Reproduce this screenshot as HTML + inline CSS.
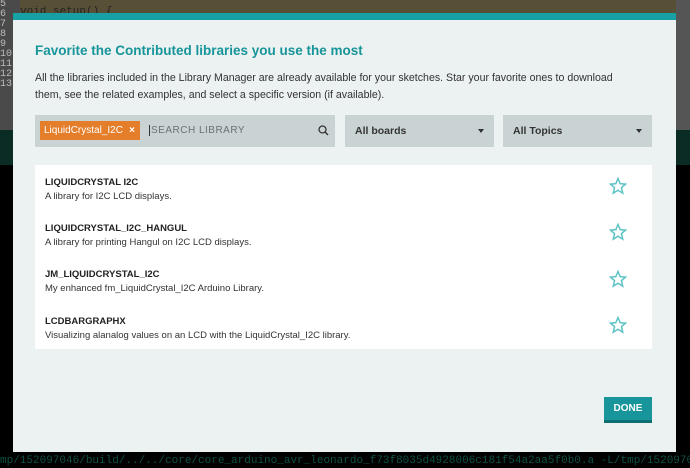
<!DOCTYPE html>
<html><head><style>
*{margin:0;padding:0;box-sizing:border-box}
body{width:690px;height:468px;overflow:hidden;background:#000;font-family:"Liberation Sans",sans-serif;position:relative}
.bg1{position:absolute;left:0;top:0;width:690px;height:130px;background:#584f37}
.bg2{position:absolute;left:0;top:130px;width:690px;height:35px;background:#0a2c24}
.gut{position:absolute;left:0;top:0;width:20px;height:130px;background:#4a4a4a;color:#bbb;font:10px "Liberation Mono",monospace;line-height:10px}
.bgr{position:absolute;left:676px;top:0;width:14px;height:130px;background:#555}
.code{position:absolute;left:20px;top:6px;color:#222;font:11px "Liberation Mono",monospace}
.bot{position:absolute;left:0;top:455px;width:690px;overflow:hidden;color:#0f5045;font:11px "Liberation Mono",monospace;white-space:nowrap}
.modal{position:absolute;left:13px;top:13px;width:663px;height:439px;background:#ecf1f1;border-top:7px solid #17a1a5}
h1{position:absolute;left:22px;top:23px;font-size:13.5px;color:#17959a;font-weight:bold}
.desc{position:absolute;left:22px;top:50px;width:598px;font-size:10.6px;line-height:17px;color:#333}
.search{position:absolute;left:22px;top:95px;width:300px;height:32px;background:#cad3d4}
.tag{position:absolute;left:5px;top:6px;width:100px;height:19px;background:#e47e2a;color:#fff;font-size:10px;line-height:19px;padding-left:4px}
.tag b{position:absolute;right:5px;top:0}
.ph{position:absolute;left:114px;top:10px;font-size:10px;color:#6a7173;letter-spacing:.5px;border-left:1px solid #333;padding-left:1px}
.sel{position:absolute;top:95px;height:32px;background:#cad3d4;font-size:10.5px;font-weight:bold;color:#333;line-height:32px;padding-left:10px}
.sel:after{content:"";position:absolute;right:10px;top:14px;border:3.5px solid transparent;border-top:4px solid #333}
.list{position:absolute;left:22px;top:145px;width:617px;height:184px;background:#fff}
.it{position:absolute;left:10px;width:590px}
.it .t{font-size:9.5px;font-weight:bold;color:#222}
.it .d{font-size:9.5px;color:#333;margin-top:3px}
.star{position:absolute;left:574px}
.done{position:absolute;left:591px;top:377px;width:48px;height:26px;background:#17959a;border-bottom:3px solid #0e6f73;color:#fff;font-size:10px;font-weight:bold;text-align:center;line-height:24px}
</style></head><body>
<div class="bg1"></div><div class="bg2"></div><div class="bgr"></div>
<div class="gut">5<br>6<br>7<br>8<br>9<br>10<br>11<br>12<br>13</div>
<div class="code">void setup() {</div>
<div class="bot">mp/152097046/build/../../core/core_arduino_avr_leonardo_f73f8035d4928006c181f54a2aa5f0b0.a -L/tmp/152097046/build -lm</div>
<div class="modal">
<h1>Favorite the Contributed libraries you use the most</h1>
<div class="desc">All the libraries included in the Library Manager are already available for your sketches. Star your favorite ones to download them, see the related examples, and select a specific version (if available).</div>
<div class="search"><div class="tag">LiquidCrystal_I2C<b>×</b></div><div class="ph">SEARCH LIBRARY</div>
<svg style="position:absolute;left:283px;top:10px" width="11" height="11" viewBox="0 0 11 11"><circle cx="4.5" cy="4.5" r="3.5" fill="none" stroke="#333" stroke-width="1.3"/><path d="M7 7l3 3" stroke="#333" stroke-width="1.4"/></svg></div>
<div class="sel" style="left:332px;width:149px">All boards</div>
<div class="sel" style="left:490px;width:149px">All Topics</div>
<div class="list">
<div class="it" style="top:12px"><div class="t">LIQUIDCRYSTAL I2C</div><div class="d">A library for I2C LCD displays.</div></div>
<div class="it" style="top:58px"><div class="t">LIQUIDCRYSTAL_I2C_HANGUL</div><div class="d">A library for printing Hangul on I2C LCD displays.</div></div>
<div class="it" style="top:104px"><div class="t">JM_LIQUIDCRYSTAL_I2C</div><div class="d">My enhanced fm_LiquidCrystal_I2C Arduino Library.</div></div>
<div class="it" style="top:151px"><div class="t">LCDBARGRAPHX</div><div class="d">Visualizing alanalog values on an LCD with the LiquidCrystal_I2C library.</div></div>
<svg class="star" style="top:12px" width="18" height="18" viewBox="0 0 24 24"><path d="M12 2l2.9 6.9 7.1.6-5.4 4.7 1.7 7.3L12 17.6 5.7 21.5l1.7-7.3L2 9.5l7.1-.6z" fill="none" stroke="#5fc3c6" stroke-width="2"/></svg>
<svg class="star" style="top:58px" width="18" height="18" viewBox="0 0 24 24"><path d="M12 2l2.9 6.9 7.1.6-5.4 4.7 1.7 7.3L12 17.6 5.7 21.5l1.7-7.3L2 9.5l7.1-.6z" fill="none" stroke="#5fc3c6" stroke-width="2"/></svg>
<svg class="star" style="top:105px" width="18" height="18" viewBox="0 0 24 24"><path d="M12 2l2.9 6.9 7.1.6-5.4 4.7 1.7 7.3L12 17.6 5.7 21.5l1.7-7.3L2 9.5l7.1-.6z" fill="none" stroke="#5fc3c6" stroke-width="2"/></svg>
<svg class="star" style="top:151px" width="18" height="18" viewBox="0 0 24 24"><path d="M12 2l2.9 6.9 7.1.6-5.4 4.7 1.7 7.3L12 17.6 5.7 21.5l1.7-7.3L2 9.5l7.1-.6z" fill="none" stroke="#5fc3c6" stroke-width="2"/></svg>
</div>
<div class="done">DONE</div>
</div>
</body></html>
